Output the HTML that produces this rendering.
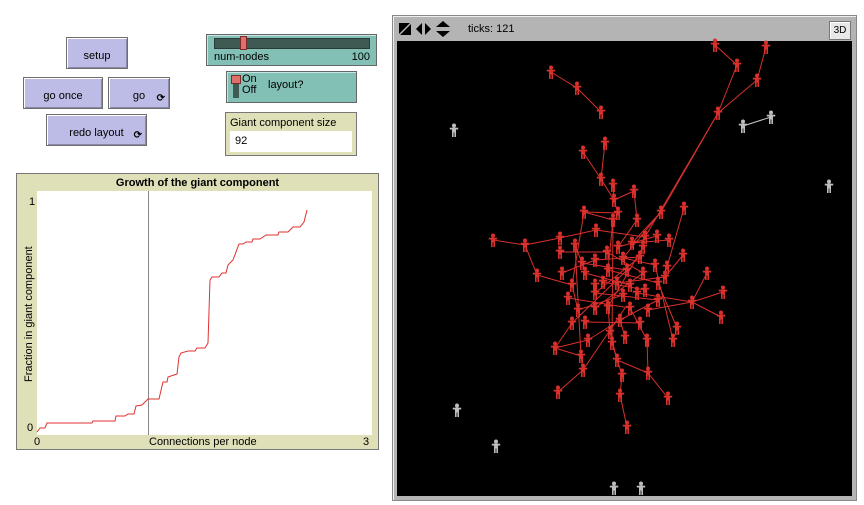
<!DOCTYPE html>
<html><head><meta charset="utf-8"><style>
body{margin:0;width:864px;height:505px;background:#fff;position:relative;overflow:hidden;font-family:"Liberation Sans",sans-serif;font-size:11px;color:#000}
.a{position:absolute;box-sizing:border-box}
.btn{background:#bcbce6;border:1px solid #6e6e6e;box-shadow:inset 1px 1px 0 #fff,inset -1px -1px 0 #8a8aa8;text-align:center}
.fe{position:absolute;right:4px;bottom:4px;font-size:10px;font-weight:bold;line-height:10px}
</style></head><body>
<div class="a btn" style="left:66px;top:37px;width:62px;height:32px;line-height:36px">setup</div>
<div class="a btn" style="left:23px;top:77px;width:80px;height:32px;line-height:36px">go once</div>
<div class="a btn" style="left:108px;top:77px;width:62px;height:32px;line-height:36px">go<span class="fe">⟳</span></div>
<div class="a btn" style="left:46px;top:114px;width:101px;height:32px;line-height:36px">redo layout<span class="fe">⟳</span></div>

<div class="a" style="left:206px;top:34px;width:171px;height:32px;background:#82bfb4;border:1px solid #666;box-shadow:inset 1px 1px 0 #c8e6e0">
 <div class="a" style="left:7px;top:3px;width:156px;height:11px;background:#3f5a53;border:1px solid #2a3a36"></div>
 <div class="a" style="left:33px;top:1px;width:7px;height:14px;background:#e0706a;border:1px solid #7a2a2a"></div>
 <div class="a" style="left:7px;top:16px">num-nodes</div>
 <div class="a" style="right:6px;top:16px">100</div>
</div>
<div class="a" style="left:226px;top:71px;width:131px;height:32px;background:#82bfb4;border:1px solid #666;box-shadow:inset 1px 1px 0 #c8e6e0">
 <div class="a" style="left:6px;top:5px;width:6px;height:21px;background:#3f5a53"></div>
 <div class="a" style="left:4px;top:3px;width:10px;height:9px;background:#e0706a;border:1px solid #7a2a2a"></div>
 <div class="a" style="left:15px;top:2px;line-height:11px">On<br>Off</div>
 <div class="a" style="left:41px;top:7px">layout?</div>
</div>
<div class="a" style="left:225px;top:112px;width:132px;height:44px;background:#dfdfb8;border:1px solid #777">
 <div class="a" style="left:4px;top:4px">Giant component size</div>
 <div class="a" style="left:4px;top:18px;width:122px;height:21px;background:#fff;padding:4px 5px">92</div>
</div>

<div class="a" style="left:16px;top:173px;width:363px;height:277px;background:#dfdfb8;border:1px solid #777">
 <div class="a" style="left:0;top:3px;width:100%;text-align:center;font-weight:bold">Growth of the giant component</div>
</div>
<svg class="a" style="left:0;top:0" width="390" height="460">
 <rect x="37" y="191" width="335" height="244" fill="#fff"/>
 <line x1="148.5" y1="191" x2="148.5" y2="435" stroke="#888"/>
 <polyline fill="none" stroke="#e03030" stroke-width="1" points="37,432 40,428 45,428 47,423 92,423 93,421 115,421 116,416 125,416 128,414 134,414 136,406 142,405 148,399 159,399 162,386 163,382 167,382 168,377 177,374 179,357 181,353 188,351 195,351 197,348 205,348 208,343 210,280 212,277 219,277 222,273 226,273 228,265 233,260 239,244 243,244 246,242 252,242 253,239 260,239 266,235 278,235 279,232 288,232 293,227 300,227 304,222 307,210"/>
 <text x="29" y="205" font-size="11" font-family="Liberation Sans">1</text>
 <text x="27" y="431" font-size="11" font-family="Liberation Sans">0</text>
 <text x="34" y="445" font-size="11" font-family="Liberation Sans">0</text>
 <text x="149" y="445" font-size="11" font-family="Liberation Sans">Connections per node</text>
 <text x="363" y="445" font-size="11" font-family="Liberation Sans">3</text>
 <text transform="translate(32,382) rotate(-90)" font-size="11" font-family="Liberation Sans">Fraction in giant component</text>
</svg>

<div class="a" style="left:392px;top:15px;width:465px;height:486px;background:#b4b4b4;border:1px solid #888;box-shadow:inset 1px 1px 0 #eee">
 <div class="a" style="left:75px;top:7px">ticks: 121</div>
 <div class="a" style="left:436px;top:5px;width:22px;height:19px;background:#e8e8e8;border:1px solid #777;box-shadow:inset 1px 1px 0 #fff;font-size:10px;text-align:center;line-height:18px">3D</div>
</div>
<svg class="a" style="left:0;top:0" width="864" height="505">
 <polygon points="399,23 411,23 399,35" fill="#000"/><polygon points="411,23 411,35 399,35" fill="#000"/><line x1="399" y1="35" x2="411" y2="23" stroke="#b4b4b4" stroke-width="1.5"/>
 <polygon points="416,29 422,23 422,35" fill="#000"/><polygon points="425,23 431,29 425,35" fill="#000"/>
 <polygon points="436,27 443,21 450,27" fill="#000"/><polygon points="436,31 450,31 443,37" fill="#000"/>
 <rect x="397" y="41" width="455" height="455" fill="#000"/>
 <defs><symbol id="p" viewBox="-5 -7 10 14" overflow="visible">
  <circle cx="0" cy="-4.5" r="2"/><rect x="-2" y="-2.5" width="4" height="5"/><rect x="-4.2" y="-2.3" width="8.4" height="1.8"/><rect x="-2" y="2" width="1.6" height="5"/><rect x="0.4" y="2" width="1.6" height="5"/>
 </symbol></defs>
 <g stroke="#d8302c" stroke-width="1">
  <line x1="715" y1="45" x2="737" y2="65"/><line x1="737" y1="65" x2="718" y2="113"/><line x1="766" y1="47" x2="757" y2="80"/><line x1="757" y1="80" x2="718" y2="113"/><line x1="718" y1="113" x2="661" y2="212"/><line x1="718" y1="113" x2="645" y2="237"/>
  <line x1="551" y1="72" x2="577" y2="88"/><line x1="577" y1="88" x2="601" y2="112"/><line x1="583" y1="152" x2="601" y2="179"/><line x1="605" y1="143" x2="601" y2="179"/><line x1="601" y1="179" x2="614" y2="200"/>
  <line x1="613" y1="185" x2="614" y2="200"/><line x1="634" y1="191" x2="614" y2="200"/><line x1="634" y1="191" x2="637" y2="220"/><line x1="614" y1="200" x2="618" y2="213"/><line x1="584" y1="212" x2="613" y2="220"/><line x1="584" y1="212" x2="618" y2="213"/><line x1="584" y1="212" x2="572" y2="285"/>
  <line x1="613" y1="220" x2="608" y2="270"/><line x1="637" y1="220" x2="618" y2="247"/><line x1="661" y1="212" x2="632" y2="243"/><line x1="661" y1="212" x2="623" y2="258"/><line x1="684" y1="208" x2="667" y2="267"/>
  <line x1="493" y1="240" x2="525" y2="245"/><line x1="525" y1="245" x2="560" y2="238"/><line x1="560" y1="238" x2="596" y2="230"/><line x1="525" y1="245" x2="537" y2="275"/><line x1="537" y1="275" x2="572" y2="285"/><line x1="596" y1="230" x2="645" y2="237"/>
  <line x1="560" y1="252" x2="607" y2="252"/><line x1="575" y1="245" x2="582" y2="263"/><line x1="562" y1="273" x2="595" y2="260"/><line x1="582" y1="263" x2="627" y2="270"/><line x1="595" y1="260" x2="640" y2="257"/><line x1="607" y1="252" x2="643" y2="273"/>
  <line x1="618" y1="247" x2="657" y2="236"/><line x1="632" y1="243" x2="669" y2="240"/><line x1="643" y1="247" x2="608" y2="307"/><line x1="623" y1="258" x2="655" y2="265"/><line x1="640" y1="257" x2="595" y2="293"/><line x1="683" y1="255" x2="665" y2="277"/>
  <line x1="707" y1="273" x2="692" y2="302"/><line x1="723" y1="292" x2="692" y2="302"/><line x1="721" y1="317" x2="692" y2="302"/><line x1="692" y1="302" x2="648" y2="310"/><line x1="692" y1="302" x2="637" y2="293"/>
  <line x1="585" y1="273" x2="630" y2="285"/><line x1="608" y1="270" x2="658" y2="283"/><line x1="627" y1="270" x2="572" y2="323"/><line x1="643" y1="273" x2="595" y2="308"/><line x1="665" y1="277" x2="617" y2="283"/><line x1="603" y1="282" x2="645" y2="290"/>
  <line x1="568" y1="298" x2="630" y2="308"/><line x1="595" y1="293" x2="658" y2="300"/><line x1="623" y1="295" x2="578" y2="310"/><line x1="658" y1="300" x2="620" y2="320"/><line x1="608" y1="307" x2="610" y2="332"/><line x1="630" y1="308" x2="647" y2="340"/>
  <line x1="572" y1="323" x2="555" y2="348"/><line x1="585" y1="322" x2="640" y2="323"/><line x1="620" y1="320" x2="625" y2="337"/><line x1="555" y1="348" x2="588" y2="340"/><line x1="555" y1="348" x2="581" y2="356"/><line x1="588" y1="340" x2="620" y2="320"/>
  <line x1="610" y1="332" x2="617" y2="360"/><line x1="612" y1="343" x2="622" y2="375"/><line x1="617" y1="360" x2="648" y2="373"/><line x1="581" y1="356" x2="583" y2="370"/><line x1="583" y1="370" x2="558" y2="392"/><line x1="583" y1="370" x2="625" y2="308"/>
  <line x1="647" y1="340" x2="648" y2="373"/><line x1="648" y1="373" x2="668" y2="398"/><line x1="622" y1="375" x2="620" y2="395"/><line x1="620" y1="395" x2="627" y2="427"/><line x1="677" y1="328" x2="658" y2="283"/><line x1="673" y1="340" x2="655" y2="265"/>
  <line x1="572" y1="285" x2="578" y2="310"/><line x1="575" y1="245" x2="581" y2="356"/><line x1="613" y1="220" x2="612" y2="343"/>
 </g>
 <line x1="743" y1="126" x2="771" y2="117" stroke="#ccc"/>
 <g fill="#d8302c">
 <use href="#p" x="710" y="38" width="10" height="14"/><use href="#p" x="732" y="58" width="10" height="14"/><use href="#p" x="761" y="40" width="10" height="14"/><use href="#p" x="752" y="73" width="10" height="14"/><use href="#p" x="713" y="106" width="10" height="14"/>
 <use href="#p" x="546" y="65" width="10" height="14"/><use href="#p" x="572" y="81" width="10" height="14"/><use href="#p" x="596" y="105" width="10" height="14"/>
 <use href="#p" x="600" y="136" width="10" height="14"/><use href="#p" x="578" y="145" width="10" height="14"/><use href="#p" x="596" y="172" width="10" height="14"/><use href="#p" x="608" y="178" width="10" height="14"/><use href="#p" x="629" y="184" width="10" height="14"/><use href="#p" x="609" y="193" width="10" height="14"/><use href="#p" x="613" y="206" width="10" height="14"/><use href="#p" x="579" y="205" width="10" height="14"/><use href="#p" x="608" y="213" width="10" height="14"/><use href="#p" x="632" y="213" width="10" height="14"/><use href="#p" x="656" y="205" width="10" height="14"/><use href="#p" x="679" y="201" width="10" height="14"/>
 <use href="#p" x="591" y="223" width="10" height="14"/><use href="#p" x="555" y="231" width="10" height="14"/><use href="#p" x="520" y="238" width="10" height="14"/><use href="#p" x="488" y="233" width="10" height="14"/><use href="#p" x="570" y="238" width="10" height="14"/><use href="#p" x="555" y="245" width="10" height="14"/><use href="#p" x="532" y="268" width="10" height="14"/><use href="#p" x="557" y="266" width="10" height="14"/><use href="#p" x="577" y="256" width="10" height="14"/><use href="#p" x="590" y="253" width="10" height="14"/><use href="#p" x="602" y="245" width="10" height="14"/><use href="#p" x="613" y="240" width="10" height="14"/><use href="#p" x="627" y="236" width="10" height="14"/><use href="#p" x="640" y="230" width="10" height="14"/><use href="#p" x="652" y="229" width="10" height="14"/><use href="#p" x="664" y="233" width="10" height="14"/><use href="#p" x="638" y="240" width="10" height="14"/><use href="#p" x="618" y="251" width="10" height="14"/><use href="#p" x="635" y="250" width="10" height="14"/><use href="#p" x="650" y="258" width="10" height="14"/><use href="#p" x="662" y="260" width="10" height="14"/><use href="#p" x="678" y="248" width="10" height="14"/><use href="#p" x="702" y="266" width="10" height="14"/><use href="#p" x="718" y="285" width="10" height="14"/><use href="#p" x="687" y="295" width="10" height="14"/><use href="#p" x="716" y="310" width="10" height="14"/>
 <use href="#p" x="580" y="266" width="10" height="14"/><use href="#p" x="603" y="263" width="10" height="14"/><use href="#p" x="622" y="263" width="10" height="14"/><use href="#p" x="638" y="266" width="10" height="14"/><use href="#p" x="660" y="270" width="10" height="14"/><use href="#p" x="567" y="278" width="10" height="14"/><use href="#p" x="590" y="278" width="10" height="14"/><use href="#p" x="598" y="275" width="10" height="14"/><use href="#p" x="612" y="276" width="10" height="14"/><use href="#p" x="625" y="278" width="10" height="14"/><use href="#p" x="632" y="286" width="10" height="14"/><use href="#p" x="640" y="283" width="10" height="14"/><use href="#p" x="653" y="276" width="10" height="14"/><use href="#p" x="563" y="291" width="10" height="14"/><use href="#p" x="590" y="286" width="10" height="14"/><use href="#p" x="618" y="288" width="10" height="14"/><use href="#p" x="653" y="293" width="10" height="14"/><use href="#p" x="573" y="303" width="10" height="14"/><use href="#p" x="590" y="301" width="10" height="14"/><use href="#p" x="603" y="300" width="10" height="14"/><use href="#p" x="625" y="301" width="10" height="14"/><use href="#p" x="643" y="303" width="10" height="14"/>
 <use href="#p" x="567" y="316" width="10" height="14"/><use href="#p" x="580" y="315" width="10" height="14"/><use href="#p" x="615" y="313" width="10" height="14"/><use href="#p" x="635" y="316" width="10" height="14"/><use href="#p" x="605" y="325" width="10" height="14"/><use href="#p" x="620" y="330" width="10" height="14"/><use href="#p" x="642" y="333" width="10" height="14"/><use href="#p" x="672" y="321" width="10" height="14"/><use href="#p" x="668" y="333" width="10" height="14"/><use href="#p" x="583" y="333" width="10" height="14"/><use href="#p" x="550" y="341" width="10" height="14"/><use href="#p" x="607" y="336" width="10" height="14"/><use href="#p" x="576" y="349" width="10" height="14"/><use href="#p" x="612" y="353" width="10" height="14"/><use href="#p" x="578" y="363" width="10" height="14"/><use href="#p" x="617" y="368" width="10" height="14"/><use href="#p" x="643" y="366" width="10" height="14"/><use href="#p" x="553" y="385" width="10" height="14"/><use href="#p" x="615" y="388" width="10" height="14"/><use href="#p" x="663" y="391" width="10" height="14"/><use href="#p" x="622" y="420" width="10" height="14"/>
 </g>
 <g fill="#bdbdbd">
 <use href="#p" x="449" y="123" width="10" height="14"/><use href="#p" x="738" y="119" width="10" height="14"/><use href="#p" x="766" y="110" width="10" height="14"/><use href="#p" x="824" y="179" width="10" height="14"/><use href="#p" x="452" y="403" width="10" height="14"/><use href="#p" x="491" y="439" width="10" height="14"/><use href="#p" x="609" y="481" width="10" height="14"/><use href="#p" x="636" y="481" width="10" height="14"/>
 </g>
</svg>
</body></html>
